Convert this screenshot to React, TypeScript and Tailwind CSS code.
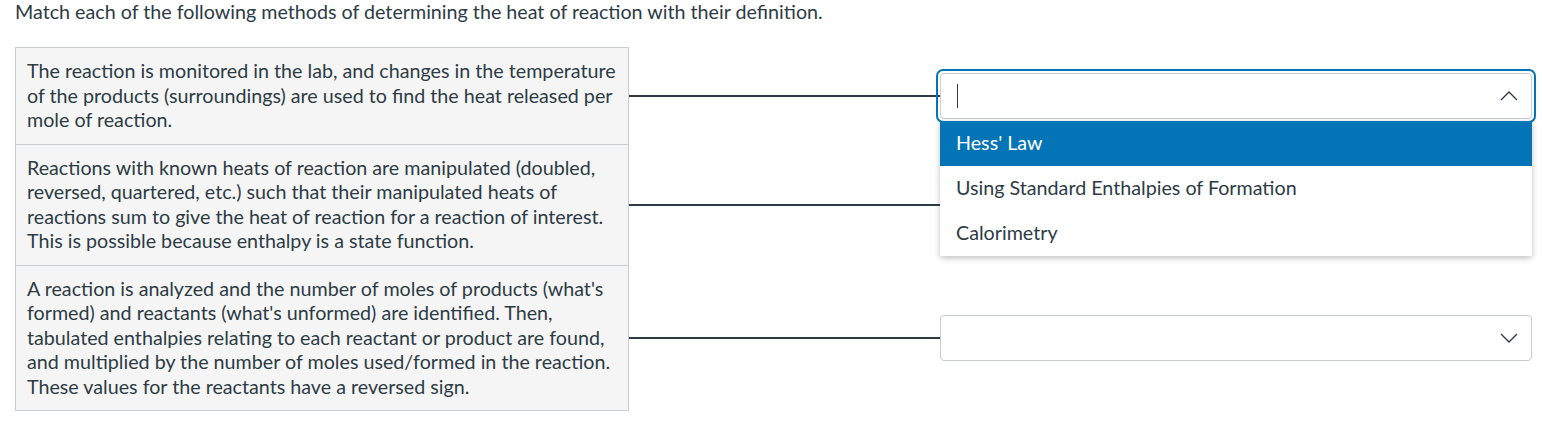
import React from 'react';

const ROWS = [
  {
    id: 'calorimetry',
    text: 'The reaction is monitored in the lab, and changes in the temperature of the products (surroundings) are used to find the heat released per mole of reaction.',
    open: true,
  },
  {
    id: 'hess',
    text: 'Reactions with known heats of reaction are manipulated (doubled, reversed, quartered, etc.) such that their manipulated heats of reactions sum to give the heat of reaction for a reaction of interest. This is possible because enthalpy is a state function.',
    open: false,
  },
  {
    id: 'formation',
    text: "A reaction is analyzed and the number of moles of products (what's formed) and reactants (what's unformed) are identified. Then, tabulated enthalpies relating to each reactant or product are found, and multiplied by the number of moles used/formed in the reaction. These values for the reactants have a reversed sign.",
    open: false,
  },
];

const OPTIONS = ["Hess' Law", 'Using Standard Enthalpies of Formation', 'Calorimetry'];

function Chevron({ up }: { up: boolean }) {
  return (
    <svg width="18" height="10" viewBox="0 0 18 10" fill="none" className="text-[#2d3b45]">
      <path d={up ? 'M1 9 L9 1 L17 9' : 'M1 1 L9 9 L17 1'} stroke="currentColor" strokeWidth="1.3" />
    </svg>
  );
}

function Select({ open }: { open: boolean }) {
  return (
    <div className="relative h-[46px] w-[592px] shrink-0">
      {open && <div className="pointer-events-none absolute -inset-1 rounded-[7px] border-2 border-[#0374b5]" />}
      <div className="flex h-full items-center justify-between rounded-[4px] border border-[#c7cdd1] bg-white pl-4 pr-[13px]">
        <span className="h-6 w-px bg-[#2d3b45]" style={{ opacity: open ? 1 : 0 }} />
        <Chevron up={open} />
      </div>
      {open && (
        <ul className="absolute left-0 right-0 top-[48px] z-20 bg-white shadow-[0_2px_6px_rgba(0,0,0,0.25)]">
          {OPTIONS.map((opt, i) => (
            <li
              key={opt}
              className={
                i === 0
                  ? 'flex h-[45px] items-center bg-[#0374b5] px-4 text-white'
                  : 'flex h-[45px] items-center px-4 text-[#2d3b45]'
              }
            >
              {opt}
            </li>
          ))}
        </ul>
      )}
    </div>
  );
}

export default function App() {
  return (
    <div className="min-h-screen w-[1542px] bg-white pl-[15px] font-['Lato',sans-serif] text-[19.7px] text-[#2d3b45]">
      <p className="leading-6">Match each of the following methods of determining the heat of reaction with their definition.</p>
      <div className="mt-[23px] w-[1517px]">
        {ROWS.map((row, i) => (
          <div key={row.id} className={i === 0 ? 'relative z-10 flex items-center' : '-mt-px flex items-center'}>
            <div className="w-[614px] shrink-0 border border-[#c7cdd1] bg-[#f5f5f5] py-[11px] pl-[11px] pr-[6px] leading-[24.5px]">
              {row.text}
            </div>
            <div className="h-[2px] flex-1 bg-[#2d3b45]" />
            <Select open={row.open} />
          </div>
        ))}
      </div>
    </div>
  );
}
